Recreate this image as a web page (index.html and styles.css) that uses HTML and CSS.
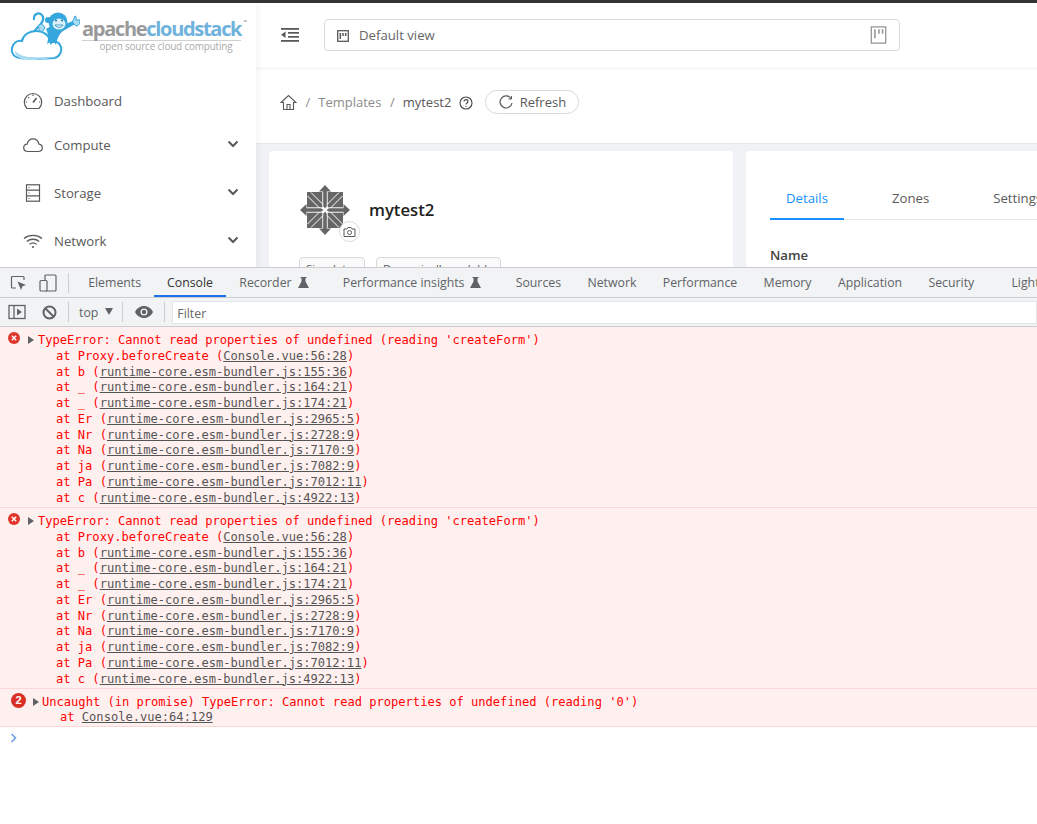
FILE: index.html
```html
<!DOCTYPE html>
<html lang="en">
<head>
<meta charset="utf-8">
<title>Apache CloudStack</title>
<link rel="stylesheet" href="styles.css">
</head>
<body>
<div class="topline"></div>
<div class="app">
  <aside class="sidebar">
    <div class="logo">
      <svg class="logo-mark" width="72" height="60" viewBox="0 0 72 60" fill="none">
        <path d="M26 12c-1-7 7-9 9-3 2 5-5 9-11 17" stroke="#35a7dc" stroke-width="2.2"/>
        <path d="M15 50c-8 1-12-4-11-10 1-5 5-8 10-7 1-6 7-10 14-10 8 0 14 5 15 12 2-2 7-2 9 2 3 5 0 12-6 13-10 1-20 1-31 0z" fill="#fff" stroke="#35a7dc" stroke-width="2"/>
        <path d="M7 43c0 6 6 9 14 9 10 0 20-1 27-3-8 1-21 2-28 0-6-1-10-3-13-6z" fill="#a9dcf3"/>
        <path d="M38 21c2 4 3 9 1 15 3-2 8-2 9 1 1-6 3-11 7-14l14-8-2-3-14 6c-3 0-5 0-8-1z" fill="#35a7dc"/>
        <circle cx="50" cy="14" r="9.5" fill="#35a7dc"/>
        <circle cx="40" cy="12" r="3" fill="#35a7dc"/>
        <ellipse cx="51" cy="16" rx="6.5" ry="5.5" fill="#d9f0fa"/>
        <path d="M47 17c2 3 6 3 8 0z" fill="#fff" stroke="#1c86bc" stroke-width=".8"/>
        <circle cx="48" cy="12.5" r="1" fill="#1c6f9c"/><circle cx="54" cy="12.5" r="1" fill="#1c6f9c"/>
        <path d="M34 24c-3-1-4-4-3-7 2-2 5 0 6 3z" fill="#a9dcf3" stroke="#35a7dc"/>
        <path d="M65 15c-1-3 1-3 2-7 2 0 1 3 1 4h4c0 3-1 6-4 6z" fill="#a9dcf3" stroke="#35a7dc"/>
      </svg>
      <div class="logo-text">
        <div class="logo-name"><span class="logo-apache">apache</span><span class="logo-cloud">cloudstack</span><sup class="logo-tm">™</sup></div>
        <div class="logo-tag">open source cloud computing</div>
      </div>
    </div>
    <nav class="menu">
      <a class="menu-item item-dash">
        <svg width="20" height="20" viewBox="0 0 20 20" fill="none" stroke="#595959" stroke-width="1.2"><path d="M4 17.500a8.700 8.700 0 1 1 12 0z"/><path d="M10 11.500l3.500-4.500" stroke-width="1.600"/><path d="M10 3.500v1.500M4 11H2.800M17.200 11H16M5.200 6.200l1 1"/></svg>
        <span>Dashboard</span>
      </a>
      <a class="menu-item">
        <svg width="20" height="20" viewBox="0 0 20 20" fill="none" stroke="#595959" stroke-width="1.2"><path d="M5 16.500c-2.600 0-4.300-1.600-4.300-3.700 0-2 1.500-3.500 3.400-3.600C4.800 6 7.200 3.800 10 3.800S15.300 6 16 9.200c1.900.2 3.300 1.700 3.300 3.600 0 2.100-1.700 3.700-4.300 3.700z"/></svg>
        <span>Compute</span>
        <svg class="chev" width="12" height="8" viewBox="0 0 12 8" fill="none" stroke="#595959" stroke-width="2"><path d="M1.500 1.500L6 6l4.500-4.500"/></svg>
      </a>
      <a class="menu-item">
        <svg width="20" height="20" viewBox="0 0 20 20" fill="none" stroke="#595959" stroke-width="1.200"><rect x="3.500" y="1.800" width="13" height="16.400"/><path d="M3.500 7.200h13M3.500 12.800h13"/><path d="M5.500 4.500h1M5.500 10h1M5.500 15.500h1"/></svg>
        <span>Storage</span>
        <svg class="chev" width="12" height="8" viewBox="0 0 12 8" fill="none" stroke="#595959" stroke-width="2"><path d="M1.500 1.500L6 6l4.500-4.500"/></svg>
      </a>
      <a class="menu-item">
        <svg width="20" height="20" viewBox="0 0 20 20" fill="none" stroke="#595959" stroke-width="1.300"><path d="M1 7.500c5-4.200 13-4.200 18 0M3.800 10.500c3.500-3 8.900-3 12.400 0M6.500 13.300c2-1.600 5-1.600 7 0"/><circle cx="10" cy="16" r="1.100" fill="#595959" stroke="none"/></svg>
        <span>Network</span>
        <svg class="chev" width="12" height="8" viewBox="0 0 12 8" fill="none" stroke="#595959" stroke-width="2"><path d="M1.500 1.500L6 6l4.500-4.500"/></svg>
      </a>
    </nav>
  </aside>
  <main class="main">
    <header class="header">
      <svg class="collapse" width="20" height="16" viewBox="0 0 20 16" fill="#595959"><rect x="1" y="1" width="18" height="1.800"/><rect x="8" y="5" width="11" height="1.700"/><rect x="8" y="9" width="11" height="1.700"/><rect x="1" y="13" width="18" height="1.800"/><path d="M5.500 4.500v6.500L1 7.800z"/></svg>
      <div class="project">
        <svg class="proj-icon" width="14" height="14" viewBox="0 0 14 14" fill="none" stroke="#595959" stroke-width="1.300"><rect x="1.700" y="1.700" width="10.600" height="10.600"/><path d="M4.300 4v6M7 4v3M9.700 4v3" stroke-width="1.500"/></svg>
        <span class="project-label">Default view</span>
        <svg class="proj-end" width="17" height="18" viewBox="0 0 18 20" fill="none" stroke="#9a9a9a" stroke-width="1.500"><rect x="1" y="1" width="16" height="18"/><path d="M5 3.500v10M9.500 3.500v5M13.500 3.500v5" stroke-width="1.800"/></svg>
      </div>
    </header>
    <section class="crumbs">
      <svg class="home" width="17" height="17" viewBox="0 0 17 17" fill="none" stroke="#595959" stroke-width="1.100"><path d="M1 8.500L8.500 1.500 16 8.500h-2.500v7H3.500v-7z"/><path d="M7 15.500v-5h3v5"/></svg>
      <span class="sep">/</span>
      <span class="crumb-link">Templates</span>
      <span class="sep">/</span>
      <span class="crumb-cur">mytest2</span>
      <svg class="help" width="14" height="14" viewBox="0 0 14 14" fill="none" stroke="#444" stroke-width="1.100"><circle cx="7" cy="7" r="6"/><path d="M5 5.500c0-2.500 4-2.500 4 0 0 1.500-2 1.500-2 3"/><path d="M7 10v1"/></svg>
      <button class="refresh">
        <svg width="14" height="14" viewBox="0 0 14 14" fill="none" stroke="#595959" stroke-width="1.200"><path d="M12 3.500A6 6 0 1 0 13 8"/><path d="M12.500 1v3h-3" stroke-width="1"/></svg>
        <span>Refresh</span>
      </button>
    </section>
    <section class="content">
      <div class="card card-left">
        <div class="resource">
          <div class="os-wrap">
            <svg width="50" height="50" viewBox="0 0 50 50">
              <g fill="#666">
                <path d="M25 0l6 6.500h-4.200V21L25 23.500 23.200 21V6.500H19z"/>
                <path d="M25 50l6-6.500h-4.200V29L25 26.500 23.200 29v14.500H19z"/>
                <path d="M0 25l6.500-6v4.200H21l2.500 1.800-2.500 1.800H6.500V31z"/>
                <path d="M50 25l-6.500-6v4.200H29L26.500 25l2.500 1.800h14.500V31z"/>
                <rect x="7" y="7" width="15.300" height="15.300"/>
                <rect x="27.700" y="7" width="15.300" height="15.300"/>
                <rect x="7" y="27.700" width="15.300" height="15.300"/>
                <rect x="27.700" y="27.700" width="15.300" height="15.300"/>
              </g>
              <g stroke="#fff" stroke-width="1" fill="none">
                <path d="M23 19.500L11 7.500M19.500 23L7.500 11"/>
                <path d="M27 19.500L39 7.500M30.500 23L42.500 11"/>
                <path d="M23 30.500L11 42.500M19.500 27L7.500 39"/>
                <path d="M27 30.500L39 42.500M30.500 27L42.500 39"/>
              </g>
            </svg>
            <span class="cam">
              <svg width="13" height="12" viewBox="0 0 13 12" fill="none" stroke="#595959" stroke-width="1"><path d="M1 3h3l1-1.500h3L9 3h3v7.500H1z"/><circle cx="6.500" cy="6.500" r="2"/></svg>
            </span>
          </div>
          <h1 class="res-name">mytest2</h1>
        </div>
        <div class="tags">
          <span class="tag">Simulator</span>
          <span class="tag">Dynamically scalable</span>
        </div>
      </div>
      <div class="card card-right">
        <div class="tabs">
          <span class="tab tab-active">Details</span>
          <span class="tab">Zones</span>
          <span class="tab">Settings</span>
        </div>
        <div class="field-label">Name</div>
      </div>
    </section>
  </main>
</div>
<section class="devtools">
  <div class="dt-tabs">
    <svg class="dt-ic" width="18" height="18" viewBox="0 0 18 18" fill="none" stroke="#5f6368" stroke-width="1.200"><path d="M6 14H2.500a1 1 0 0 1-1-1V3.500a1 1 0 0 1 1-1H13a1 1 0 0 1 1 1V6"/><path d="M7.500 7.500L16 11l-3.500 1.200L11 16z" fill="#5f6368" stroke="none"/></svg>
    <svg class="dt-ic" width="18" height="18" viewBox="0 0 18 18" fill="none" stroke="#5f6368" stroke-width="1.200"><rect x="6" y="1" width="11" height="16" rx="1"/><rect x="1" y="6.500" width="7" height="10.500" rx="1" fill="#f1f3f4"/></svg>
    <span class="dt-div"></span>
    <span class="dt-tab first">Elements</span>
    <span class="dt-tab active">Console</span>
    <span class="dt-tab wide">Recorder<svg class="flask" width="13" height="13" viewBox="0 0 13 13" fill="#5f6368"><path d="M3.500 1h6v1H8.500v3.500L12 12H1l3.500-6.500V2h-1z"/></svg></span>
    <span class="dt-tab wide">Performance insights<svg class="flask" width="13" height="13" viewBox="0 0 13 13" fill="#5f6368"><path d="M3.500 1h6v1H8.500v3.500L12 12H1l3.500-6.500V2h-1z"/></svg></span>
    <span class="dt-tab">Sources</span>
    <span class="dt-tab">Network</span>
    <span class="dt-tab">Performance</span>
    <span class="dt-tab">Memory</span>
    <span class="dt-tab">Application</span>
    <span class="dt-tab last-wide">Security</span>
    <span class="dt-tab">Lighthouse</span>
  </div>
  <div class="dt-bar">
    <svg class="bar-ic" width="18" height="16" viewBox="0 0 18 16" fill="none" stroke="#5f6368" stroke-width="1.300"><rect x="1" y="1.500" width="16" height="13"/><path d="M6 1.500v13"/><path d="M9 4.500l5 3.500-5 3.500z" fill="#5f6368" stroke="none"/></svg>
    <svg class="bar-ic clear" width="15" height="15" viewBox="0 0 15 15" fill="none" stroke="#5f6368" stroke-width="2"><circle cx="7.500" cy="7.500" r="6"/><path d="M3.500 3.500l8 8"/></svg>
    <span class="dt-div"></span>
    <span class="ctx">top</span>
    <span class="caret"></span>
    <span class="dt-div"></span>
    <svg class="eye" width="18" height="12" viewBox="0 0 18 12"><path d="M9 0c4 0 7.300 2.500 9 6-1.700 3.500-5 6-9 6s-7.300-2.500-9-6c1.700-3.500 5-6 9-6z" fill="#5f6368"/><circle cx="9" cy="6" r="3.500" fill="#f1f3f4"/><circle cx="9" cy="6" r="2.200" fill="#5f6368"/></svg>
    <span class="dt-div"></span>
    <div class="filter">Filter</div>
  </div>
  <div class="console">
    <div class="msg">
      <span class="err-ic"><svg width="12" height="12" viewBox="0 0 12 12"><circle cx="6" cy="6" r="6" fill="#e0352b"/><path d="M3.800 3.800l4.400 4.400M8.200 3.800l-4.400 4.400" stroke="#fff" stroke-width="1.400"/></svg></span>
      <span class="tri"></span>
      <div class="trace">
        <div>TypeError: Cannot read properties of undefined (reading 'createForm')</div>
        <div class="at">at Proxy.beforeCreate (<u>Console.vue:56:28</u>)</div>
        <div class="at">at b (<u>runtime-core.esm-bundler.js:155:36</u>)</div>
        <div class="at">at _ (<u>runtime-core.esm-bundler.js:164:21</u>)</div>
        <div class="at">at _ (<u>runtime-core.esm-bundler.js:174:21</u>)</div>
        <div class="at">at Er (<u>runtime-core.esm-bundler.js:2965:5</u>)</div>
        <div class="at">at Nr (<u>runtime-core.esm-bundler.js:2728:9</u>)</div>
        <div class="at">at Na (<u>runtime-core.esm-bundler.js:7170:9</u>)</div>
        <div class="at">at ja (<u>runtime-core.esm-bundler.js:7082:9</u>)</div>
        <div class="at">at Pa (<u>runtime-core.esm-bundler.js:7012:11</u>)</div>
        <div class="at">at c (<u>runtime-core.esm-bundler.js:4922:13</u>)</div>
      </div>
    </div>
    <div class="msg">
      <span class="err-ic"><svg width="12" height="12" viewBox="0 0 12 12"><circle cx="6" cy="6" r="6" fill="#e0352b"/><path d="M3.800 3.800l4.400 4.400M8.200 3.800l-4.400 4.400" stroke="#fff" stroke-width="1.400"/></svg></span>
      <span class="tri"></span>
      <div class="trace">
        <div>TypeError: Cannot read properties of undefined (reading 'createForm')</div>
        <div class="at">at Proxy.beforeCreate (<u>Console.vue:56:28</u>)</div>
        <div class="at">at b (<u>runtime-core.esm-bundler.js:155:36</u>)</div>
        <div class="at">at _ (<u>runtime-core.esm-bundler.js:164:21</u>)</div>
        <div class="at">at _ (<u>runtime-core.esm-bundler.js:174:21</u>)</div>
        <div class="at">at Er (<u>runtime-core.esm-bundler.js:2965:5</u>)</div>
        <div class="at">at Nr (<u>runtime-core.esm-bundler.js:2728:9</u>)</div>
        <div class="at">at Na (<u>runtime-core.esm-bundler.js:7170:9</u>)</div>
        <div class="at">at ja (<u>runtime-core.esm-bundler.js:7082:9</u>)</div>
        <div class="at">at Pa (<u>runtime-core.esm-bundler.js:7012:11</u>)</div>
        <div class="at">at c (<u>runtime-core.esm-bundler.js:4922:13</u>)</div>
      </div>
    </div>
    <div class="msg msg-count">
      <span class="count">2</span>
      <span class="tri"></span>
      <div class="trace">
        <div>Uncaught (in promise) TypeError: Cannot read properties of undefined (reading '0')</div>
        <div class="at">at <u>Console.vue:64:129</u></div>
      </div>
    </div>
    <div class="prompt"><svg width="8" height="10" viewBox="0 0 8 10" fill="none" stroke="#6a9fe8" stroke-width="1.600"><path d="M1.500 1l4 4-4 4"/></svg></div>
  </div>
</section>
</body>
</html>
```
FILE: styles.css
```css
* { box-sizing: border-box; }
html, body { margin: 0; padding: 0; height: 100%; background: #fff; overflow: hidden; }
body { font-family: "Open Sans", "Noto Sans", sans-serif; color: #595959; }
.topline { height: 3px; background: #333; }
.app { display: flex; height: 264px; overflow: hidden; }

.sidebar { width: 256px; flex: none; background: #fff; box-shadow: 2px 0 6px rgba(0,21,41,.05); position: relative; z-index: 2; }
.logo { display: flex; height: 64px; padding: 5px 0 0 8px; }
.logo-mark { flex: none; }
.logo-text { margin: 8px 0 0 2px; width: 159px; }
.logo-name { font-family: "Open Sans", sans-serif; font-size: 20px; font-weight: 700; line-height: 25px; letter-spacing: -1.300px; white-space: nowrap; border-bottom: 1px solid #d0d0d0; height: 25px; }
.logo-apache { color: #999; }
.logo-cloud { color: #6fb2dc; }
.logo-tm { font-size: 5px; color: #777; vertical-align: 12px; line-height: 0; font-weight: 400; letter-spacing: 0; margin-left: 2px; }
.logo-tag { font-size: 9.900px; color: #aaa; text-align: center; line-height: 11px; letter-spacing: -.15px; white-space: nowrap; padding-left: 9px; }
.menu { display: flex; flex-direction: column; padding-top: 14px; }
.menu-item { display: flex; align-items: center; height: 48px; padding: 0 17px 0 23px; font-size: 13.200px; color: #595959; gap: 11px; }
.item-dash { height: 40px; }
.chev { margin-left: auto; margin-top: -2px; }

.main { flex: 1; min-width: 0; display: flex; flex-direction: column; background: #f0f2f5; }
.header { height: 64px; flex: none; background: #fff; display: flex; align-items: center; padding: 0 0 0 24px; }
.collapse { flex: none; }
.project { margin-left: 24px; width: 576px; height: 32px; border: 1px solid #d9d9d9; border-radius: 4px; display: flex; align-items: center; padding: 0 12px 0 11px; background: #fff; }
.proj-icon { margin-right: 9px; margin-top: 2px; flex: none; }
.project-label { font-size: 13.200px; color: #666; }
.proj-end { margin-left: auto; flex: none; }
.crumbs { height: 77px; flex: none; background: #fff; display: flex; align-items: center; padding: 0 0 9px 24px; font-size: 13px; border-top: 3px solid #f8f9fa; border-bottom: 1px solid #e8e8e8; }
.sep { color: #8c8c8c; margin: 0 8px 0 8.500px; }
.crumb-link { color: #8c8c8c; }
.crumb-cur { color: #595959; }
.help { margin-left: 8px; margin-top: 2px; }
.refresh { margin-left: 12px; height: 24px; width: 94px; border: 1px solid #d9d9d9; border-radius: 12px; background: #fff; font: inherit; color: #595959; display: flex; align-items: center; justify-content: center; gap: 7px; padding: 0; }

.content { flex: 1; display: flex; gap: 13px; padding: 7px 0 0 13px; }
.card { background: #fff; border-radius: 4px; height: 200px; flex: none; }
.card-left { width: 464px; padding: 34px 30px 0; }
.card-right { width: 400px; padding: 23px 24px 0; }
.resource { display: flex; align-items: center; gap: 19px; }
.os-wrap { position: relative; width: 50px; height: 50px; margin-left: 1px; }
.cam { position: absolute; right: -10px; bottom: -7px; width: 21px; height: 21px; border-radius: 50%; background: #fff; border: 1px solid #d9d9d9; display: flex; align-items: center; justify-content: center; }
.res-name { margin: 0; font-size: 16.700px; font-weight: 600; color: #222; line-height: 24px; }
.tags { display: flex; gap: 11px; margin-top: 22px; }
.tag { border: 1px solid #d9d9d9; border-radius: 4px; background: #fafafa; height: 30px; padding: 0 6px; font-size: 11.500px; line-height: 22px; color: #595959; white-space: nowrap; }
.tabs { display: flex; height: 46px; border-bottom: 1px solid #e8e8e8; font-size: 13.200px; }
.tab { padding: 0 16px; margin-right: 32px; line-height: 48px; height: 46px; color: #595959; white-space: nowrap; }
.tab-active { color: #1890ff; border-bottom: 2px solid #1890ff; }
.field-label { margin-top: 25px; font-size: 13.200px; font-weight: 600; color: #444; line-height: 20px; }

.devtools { height: 557px; background: #fff; border-top: 1px solid #cbcdd1; overflow: hidden; }
.dt-tabs { display: flex; align-items: center; height: 30px; background: #f1f3f4; border-bottom: 1px solid #cbcdd1; font-size: 12.300px; color: #5f6368; padding-left: 10px; white-space: nowrap; }
.dt-ic { flex: none; margin-right: 11px; }
.dt-div { width: 1px; height: 20px; background: #cbcdd1; flex: none; }
.dt-tab { height: 29px; line-height: 28px; padding: 0 13.200px; display: flex; align-items: center; flex: none; }
.dt-tab.first { margin-left: 6px; padding-right: 12.700px; }
.dt-tab.active { color: #333; border-bottom: 2px solid #1a73e8; padding-top: 2px; }
.dt-tab.wide { padding-right: 20px; }
.dt-tab.last-wide { padding-right: 24px; }
.flask { margin-left: 5px; }
.dt-bar { display: flex; align-items: center; height: 29px; background: #f1f3f4; border-bottom: 1px solid #cbcdd1; font-size: 12.300px; color: #5f6368; padding-left: 8px; }
.bar-ic { flex: none; }
.clear { margin: 0 11px 0 16px; }
.ctx { margin-left: 10px; }
.caret { width: 0; height: 0; border-left: 4px solid transparent; border-right: 4px solid transparent; border-top: 7px solid #5f6368; margin: 0 9px 2px 7px; }
.eye { margin: 0 11px 0 12px; flex: none; }
.filter { margin-left: 7px; flex: 1; background: #fff; height: 23px; line-height: 24px; padding-left: 4px; border: 1px solid #e4e5e7; color: #666; }

.console { background: #fff; }
.msg { position: relative; background: #fff0f0; border-bottom: 1px solid #ffd6d6; padding: 6px 0 .750px 38px; }
.trace { font-family: "DejaVu Sans Mono", monospace; font-size: 12.080px; line-height: 15.750px; color: #f00; }
.trace div { white-space: pre; }
.trace .at { padding-left: 18px; }
.trace u { color: #555; }
.err-ic { position: absolute; left: 8px; top: 5px; line-height: 0; }
.tri { position: absolute; left: 28px; top: 9px; width: 0; height: 0; border-left: 6px solid #5f6368; border-top: 4px solid transparent; border-bottom: 4px solid transparent; }
.msg-count { padding: 5.500px 0 0 42px; }
.msg-count .tri { left: 33px; }
.count { position: absolute; left: 11px; top: 4px; width: 15px; height: 15px; border-radius: 50%; background: #d93025; color: #fff; font-size: 11px; font-weight: 700; line-height: 15px; text-align: center; font-family: "Liberation Sans", sans-serif; }
.prompt { padding: 6px 0 0 10px; line-height: 0; }
```
